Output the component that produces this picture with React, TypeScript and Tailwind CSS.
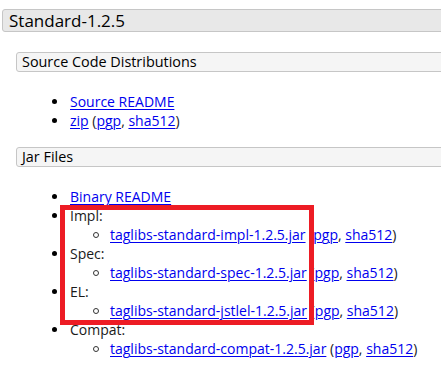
import React from "react";

const A = ({ children }: { children: React.ReactNode }) => (
  <a href="#" className="text-[#0000ee] underline decoration-1 underline-offset-[2px]">
    {children}
  </a>
);

const Disc = () => <span className="inline-block shrink-0 w-[5px] h-[5px] rounded-full bg-black" />;
const Circ = () => <span className="inline-block shrink-0 w-[6px] h-[6px] rounded-full border border-[#333]" />;

const Row1 = ({ children }: { children: React.ReactNode }) => (
  <li className="flex items-center h-[19px] pl-[52px]">
    <Disc />
    <span className="ml-[13px] whitespace-nowrap">{children}</span>
  </li>
);

const Row2 = ({ children }: { children: React.ReactNode }) => (
  <li className="flex items-center h-[19px] pl-[93px]">
    <Circ />
    <span className="ml-[11px] whitespace-nowrap">{children}</span>
  </li>
);

const Jar = ({ name }: { name: string }) => (
  <Row2>
    <A>{name}</A> (<A>pgp</A>, <A>sha512</A>)
  </Row2>
);

export default function App() {
  return (
    <div className="relative w-[441px] h-[377px] overflow-hidden bg-white text-[#1a1a1a] font-['Open_Sans',sans-serif] text-[14px]">
      <div className="pt-[9px] pl-[2px]">
        <div className="w-[460px] h-[23px] border border-[#c6c6c6] bg-[#e8e8e8] rounded-[3px] pl-[6px] text-[17px] leading-[21px] text-black">
          Standard-1.2.5
        </div>
      </div>
      <div className="pl-[16px] mt-[20px]">
        <div className="w-[440px] h-[20px] border border-[#c6c6c6] bg-[#f5f5f5] rounded-[3px] pl-[5px] text-[14.4px] leading-[18px] text-black">
          Source Code Distributions
        </div>
      </div>
      <ul className="mt-[20px]">
        <Row1>
          <A>Source README</A>
        </Row1>
        <Row1>
          <A>zip</A>&nbsp;(<A>pgp</A>, <A>sha512</A>)
        </Row1>
      </ul>
      <div className="pl-[16px] mt-[17px]">
        <div className="w-[440px] h-[20px] border border-[#c6c6c6] bg-[#f5f5f5] rounded-[3px] pl-[5px] text-[14.4px] leading-[18px] text-black">
          Jar Files
        </div>
      </div>
      <ul className="mt-[20px]">
        <Row1>
          <A>Binary README</A>
        </Row1>
        <Row1>Impl:</Row1>
        <Jar name="taglibs-standard-impl-1.2.5.jar" />
        <Row1>Spec:</Row1>
        <Jar name="taglibs-standard-spec-1.2.5.jar" />
        <Row1>EL:</Row1>
        <Jar name="taglibs-standard-jstlel-1.2.5.jar" />
        <Row1>Compat:</Row1>
        <Jar name="taglibs-standard-compat-1.2.5.jar" />
      </ul>
      <div className="absolute left-[60px] top-[205px] w-[254px] h-[120px] border-[5px] border-[#ed1c24]" />
    </div>
  );
}
